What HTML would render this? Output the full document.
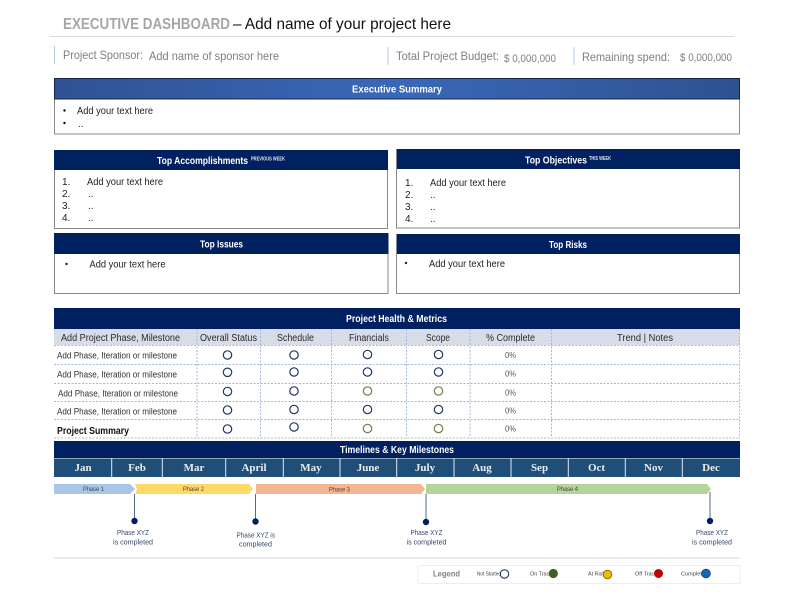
<!DOCTYPE html>
<html lang="en"><head><meta charset="utf-8"><title>Executive Dashboard</title>
<style>
html,body{margin:0;padding:0;background:#fff;width:794px;height:596px;overflow:hidden}
svg{display:block;filter:blur(.3px)}
text{font-family:"Liberation Sans",sans-serif}
.g{fill:#7f7f7f;font-size:12px}
.w{fill:#fff;font-weight:bold;font-size:10.5px}
.b{fill:#222;font-size:10px}
.h{fill:#2b2b2b;font-size:10px}
.r{fill:#333;font-size:9px}
.m{font-family:"Liberation Serif",serif;font-weight:bold;font-size:11px;fill:#e8edf3;text-anchor:middle}
.p{font-size:6px;fill:#444}
.x{font-size:7.5px;fill:#34466e}
.l{font-size:5.5px;fill:#444}
.pc{font-size:8.5px;fill:#555}
.c{fill:none;stroke:#1f3864;stroke-width:1.2}
.o{fill:none;stroke:#6f7f45;stroke-width:1.2}
.d{stroke:#a3b8de;stroke-width:1;stroke-dasharray:2 1.5;fill:none}
</style></head><body>
<svg xmlns="http://www.w3.org/2000/svg" width="794" height="596" viewBox="0 0 794 596" lengthAdjust="spacingAndGlyphs">
<defs><linearGradient id="gr" x1="0" x2="1" y1="0" y2="0"><stop offset="0" stop-color="#2f5293"/><stop offset=".5" stop-color="#3a68b8"/><stop offset="1" stop-color="#2e5290"/></linearGradient></defs>
<rect width="794" height="596" fill="#fff"/>

<text x="63" y="29" font-size="16" font-weight="bold" fill="#a6a6a6" textLength="167" lengthAdjust="spacingAndGlyphs">EXECUTIVE DASHBOARD</text>
<text x="233" y="29" font-size="16" fill="#111" textLength="218" lengthAdjust="spacingAndGlyphs">– Add name of your project here</text>
<line x1="50" x2="734" y1="36.5" y2="36.5" stroke="#d9d9d9"/>

<line x1="54.5" x2="54.5" y1="46" y2="64" stroke="#b4c7e0"/>
<text class="g" x="63" y="59" textLength="80" lengthAdjust="spacingAndGlyphs">Project Sponsor:</text>
<text class="g" x="149" y="60" textLength="130" lengthAdjust="spacingAndGlyphs">Add name of sponsor here</text>
<line x1="388" x2="388" y1="47" y2="65" stroke="#b4c7e0"/>
<text class="g" x="396" y="60" textLength="103" lengthAdjust="spacingAndGlyphs">Total Project Budget:</text>
<text class="g" x="504" y="62" textLength="52" lengthAdjust="spacingAndGlyphs" style="font-size:11px">$ 0,000,000</text>
<line x1="574" x2="574" y1="47" y2="65" stroke="#b4c7e0"/>
<text class="g" x="582" y="61" textLength="88" lengthAdjust="spacingAndGlyphs">Remaining spend:</text>
<text class="g" x="680" y="61" textLength="52" lengthAdjust="spacingAndGlyphs" style="font-size:11px">$ 0,000,000</text>

<rect x="54.5" y="78.5" width="685" height="55.5" fill="#fff" stroke="#8c8c8c"/>
<rect x="54.5" y="78.5" width="685" height="20.5" fill="url(#gr)" stroke="#14264a"/>
<text class="w" x="352" y="92.5" textLength="90" lengthAdjust="spacingAndGlyphs">Executive Summary</text>
<circle cx="64.5" cy="110.5" r="1.2" fill="#111"/><circle cx="64.5" cy="123" r="1.2" fill="#111"/>
<text class="b" x="77" y="114" textLength="76" lengthAdjust="spacingAndGlyphs">Add your text here</text>
<text class="b" x="78" y="127">..</text>

<rect x="54.5" y="150.5" width="333" height="78" fill="#fff" stroke="#888"/>
<rect x="54" y="150" width="334" height="20" fill="#002060"/>
<text class="w" x="157" y="164" textLength="91" lengthAdjust="spacingAndGlyphs">Top Accomplishments</text>
<text x="251" y="160.5" fill="#dfe5f0" font-size="5" font-weight="bold" textLength="34" lengthAdjust="spacingAndGlyphs">PREVIOUS WEEK</text>
<text class="b" x="62" y="185">1.</text><text class="b" x="62" y="197">2.</text><text class="b" x="62" y="209">3.</text><text class="b" x="62" y="221">4.</text>
<text class="b" x="87" y="185" textLength="76" lengthAdjust="spacingAndGlyphs">Add your text here</text>
<text class="b" x="88" y="197">..</text><text class="b" x="88" y="209">..</text><text class="b" x="88" y="221">..</text>

<rect x="54.5" y="233.5" width="333.5" height="60" fill="#fff" stroke="#888"/>
<rect x="54" y="233" width="334.5" height="21" fill="#002060"/>
<text class="w" x="200" y="247.5" textLength="43" lengthAdjust="spacingAndGlyphs">Top Issues</text>
<circle cx="66.5" cy="264" r="1.2" fill="#222"/>
<text class="b" x="89.5" y="267.5" textLength="76" lengthAdjust="spacingAndGlyphs">Add your text here</text>

<rect x="396.5" y="149.5" width="343" height="78.5" fill="#fff" stroke="#888"/>
<rect x="397" y="149" width="343" height="20" fill="#002060"/>
<text class="w" x="525" y="163.5" textLength="62" lengthAdjust="spacingAndGlyphs">Top Objectives</text>
<text x="589" y="160" fill="#dfe5f0" font-size="5" font-weight="bold" textLength="22" lengthAdjust="spacingAndGlyphs">THIS WEEK</text>
<text class="b" x="405" y="186">1.</text><text class="b" x="405" y="198">2.</text><text class="b" x="405" y="210">3.</text><text class="b" x="405" y="222">4.</text>
<text class="b" x="430" y="186" textLength="76" lengthAdjust="spacingAndGlyphs">Add your text here</text>
<text class="b" x="430" y="198">..</text><text class="b" x="430" y="210">..</text><text class="b" x="430" y="222">..</text>

<rect x="396.5" y="234.5" width="343" height="59" fill="#fff" stroke="#888"/>
<rect x="397" y="234" width="343" height="20" fill="#002060"/>
<text class="w" x="549" y="248" textLength="38" lengthAdjust="spacingAndGlyphs">Top Risks</text>
<circle cx="406" cy="263" r="1.2" fill="#222"/>
<text class="b" x="429" y="267" textLength="76" lengthAdjust="spacingAndGlyphs">Add your text here</text>

<rect x="54" y="308" width="686" height="21" fill="#002060"/>
<text class="w" x="346" y="322" textLength="101" lengthAdjust="spacingAndGlyphs" style="font-size:10px">Project Health &amp; Metrics</text>
<rect x="54" y="329" width="686" height="16" fill="#d6dce8"/>
<text class="h" x="61" y="341" textLength="119" lengthAdjust="spacingAndGlyphs">Add Project Phase, Milestone</text>
<text class="h" x="200" y="341" textLength="57" lengthAdjust="spacingAndGlyphs">Overall Status</text>
<text class="h" x="277" y="341" textLength="37" lengthAdjust="spacingAndGlyphs">Schedule</text>
<text class="h" x="349" y="341" textLength="40" lengthAdjust="spacingAndGlyphs">Financials</text>
<text class="h" x="426" y="341" textLength="24" lengthAdjust="spacingAndGlyphs">Scope</text>
<text class="h" x="486" y="341" textLength="49" lengthAdjust="spacingAndGlyphs">% Complete</text>
<text class="h" x="617" y="341" textLength="56" lengthAdjust="spacingAndGlyphs">Trend | Notes</text>

<path class="d" d="M54 345.5H740M54 364.5H740M54 383.5H740M54 401.5H740M54 419.5H740M54 438H740M197 329V438M260.5 329V438M331.5 329V438M406.5 329V438M470 329V438M551.5 329V438M739.5 329V438"/>

<text class="r" x="57" y="358.5" textLength="120" lengthAdjust="spacingAndGlyphs">Add Phase, Iteration or milestone</text>
<text class="r" x="57" y="377.5" textLength="120" lengthAdjust="spacingAndGlyphs">Add Phase, Iteration or milestone</text>
<text class="r" x="58" y="396.5" textLength="120" lengthAdjust="spacingAndGlyphs">Add Phase, Iteration or milestone</text>
<text class="r" x="57" y="414.5" textLength="120" lengthAdjust="spacingAndGlyphs">Add Phase, Iteration or milestone</text>
<text x="57" y="434" font-size="10" font-weight="bold" fill="#111" textLength="72" lengthAdjust="spacingAndGlyphs">Project Summary</text>

<circle class="c" cx="227.5" cy="355" r="4.2"/><circle class="c" cx="227.5" cy="372.3" r="4.2"/><circle class="c" cx="227.5" cy="391.5" r="4.2"/><circle class="c" cx="227.5" cy="410" r="4.2"/><circle class="c" cx="227.5" cy="429" r="4.2"/>
<circle class="c" cx="294" cy="355" r="4.2"/><circle class="c" cx="294" cy="372" r="4.2"/><circle class="c" cx="294" cy="391" r="4.2"/><circle class="c" cx="294" cy="409.5" r="4.2"/><circle class="c" cx="294" cy="427" r="4.2"/>
<circle class="c" cx="367.5" cy="354.5" r="4.2"/><circle class="c" cx="367.5" cy="372" r="4.2"/><circle class="o" cx="367.5" cy="391" r="4.2"/><circle class="c" cx="367.5" cy="409.5" r="4.2"/><circle class="o" cx="367.5" cy="428.5" r="4.2"/>
<circle class="c" cx="438.5" cy="354.5" r="4.2"/><circle class="c" cx="438.5" cy="372" r="4.2"/><circle class="o" cx="438.5" cy="391" r="4.2"/><circle class="c" cx="438.5" cy="409.5" r="4.2"/><circle class="o" cx="438.5" cy="428.5" r="4.2"/>

<text class="pc" x="505" y="358" textLength="11" lengthAdjust="spacingAndGlyphs">0%</text>
<text class="pc" x="505" y="376.5" textLength="11" lengthAdjust="spacingAndGlyphs">0%</text>
<text class="pc" x="505" y="395.5" textLength="11" lengthAdjust="spacingAndGlyphs">0%</text>
<text class="pc" x="505" y="413.5" textLength="11" lengthAdjust="spacingAndGlyphs">0%</text>
<text class="pc" x="505" y="431.5" textLength="11" lengthAdjust="spacingAndGlyphs">0%</text>

<rect x="54" y="441" width="686" height="17" fill="#002060"/>
<text class="w" x="340" y="453" textLength="114" lengthAdjust="spacingAndGlyphs" style="font-size:10px">Timelines &amp; Key Milestones</text>
<rect x="54" y="458.5" width="686" height="18.5" fill="#1f4e79"/>
<path d="M111.7 458V477M162.3 458V477M225.7 458V477M283.3 458V477M340 458V477M396.7 458V477M454 458V477M511 458V477M568.3 458V477M625.3 458V477M682.3 458V477" stroke="#dfe8f2" stroke-width="1"/>
<text class="m" x="83" y="471">Jan</text><text class="m" x="137" y="471">Feb</text><text class="m" x="194" y="471">Mar</text><text class="m" x="254" y="471">April</text><text class="m" x="311" y="471">May</text><text class="m" x="368" y="471">June</text><text class="m" x="425" y="471">July</text><text class="m" x="482" y="471">Aug</text><text class="m" x="539.5" y="471">Sep</text><text class="m" x="596.5" y="471">Oct</text><text class="m" x="653.5" y="471">Nov</text><text class="m" x="711" y="471">Dec</text>

<polygon points="54,484 130,484 135,489 130,494 54,494" fill="#a9c6e8"/>
<polygon points="135,484 249,484 253,489 249,494 135,494 137,489" fill="#ffd966"/>
<polygon points="256,484 421,484 425,489 421,494 256,494" fill="#f4b690"/>
<polygon points="426,484 707,484 711,489 707,494 426,494" fill="#b5d39b"/>
<text class="p" x="83" y="491" textLength="21" lengthAdjust="spacingAndGlyphs">Phase 1</text>
<text class="p" x="183" y="491" textLength="21" lengthAdjust="spacingAndGlyphs">Phase 2</text>
<text class="p" x="329" y="491.5" textLength="21" lengthAdjust="spacingAndGlyphs">Phase 3</text>
<text class="p" x="557" y="491" textLength="21" lengthAdjust="spacingAndGlyphs">Phase 4</text>

<path d="M134.5 494V521M255.5 494V521M426 494V522M710 492V521" stroke="#56688f" stroke-width="1"/>
<circle cx="134.5" cy="521" r="3.2" fill="#002060"/><circle cx="255.5" cy="521.5" r="3.2" fill="#002060"/><circle cx="426" cy="522" r="3.2" fill="#002060"/><circle cx="710" cy="521" r="3.2" fill="#002060"/>

<text class="x" x="117" y="535" textLength="32" lengthAdjust="spacingAndGlyphs">Phase XYZ</text>
<text class="x" x="113" y="544.5" textLength="40" lengthAdjust="spacingAndGlyphs">is completed</text>
<text class="x" x="236.5" y="537.5" textLength="38.5" lengthAdjust="spacingAndGlyphs">Phase XYZ is</text>
<text class="x" x="239" y="546.5" textLength="33" lengthAdjust="spacingAndGlyphs">completed</text>
<text class="x" x="410.5" y="535" textLength="32" lengthAdjust="spacingAndGlyphs">Phase XYZ</text>
<text class="x" x="406.5" y="544.5" textLength="40" lengthAdjust="spacingAndGlyphs">is completed</text>
<text class="x" x="696" y="535" textLength="32" lengthAdjust="spacingAndGlyphs">Phase XYZ</text>
<text class="x" x="692" y="544.5" textLength="40" lengthAdjust="spacingAndGlyphs">is completed</text>

<line x1="54" x2="740" y1="558" y2="558" stroke="#d9d9d9"/>
<rect x="418" y="565.5" width="322" height="18" fill="#fff" stroke="#eee"/>
<text x="433" y="576.5" font-size="8.5" fill="#7f7f7f" font-weight="bold" textLength="27" lengthAdjust="spacingAndGlyphs">Legend</text>
<text class="l" x="477" y="575.5" textLength="24" lengthAdjust="spacingAndGlyphs">Not Started</text>
<circle cx="504.5" cy="574" r="4.2" fill="#fff" stroke="#1f3864" stroke-width="1.1"/>
<text class="l" x="530" y="575.5" textLength="22" lengthAdjust="spacingAndGlyphs">On Track</text>
<circle cx="553.3" cy="573.5" r="4.6" fill="#3f6220"/>
<text class="l" x="588" y="575.5" textLength="17" lengthAdjust="spacingAndGlyphs">At Risk</text>
<circle cx="607.5" cy="574.5" r="4.3" fill="#f5b800" stroke="#7f6000" stroke-width=".8"/>
<text class="l" x="635" y="575.5" textLength="22" lengthAdjust="spacingAndGlyphs">Off Track</text>
<circle cx="658.5" cy="573.5" r="4.5" fill="#c00000"/>
<text class="l" x="681" y="575.5" textLength="24" lengthAdjust="spacingAndGlyphs">Complete</text>
<circle cx="706" cy="573.5" r="4.4" fill="#0e6ab8" stroke="#1f3864" stroke-width=".7"/>
</svg>
</body></html>
